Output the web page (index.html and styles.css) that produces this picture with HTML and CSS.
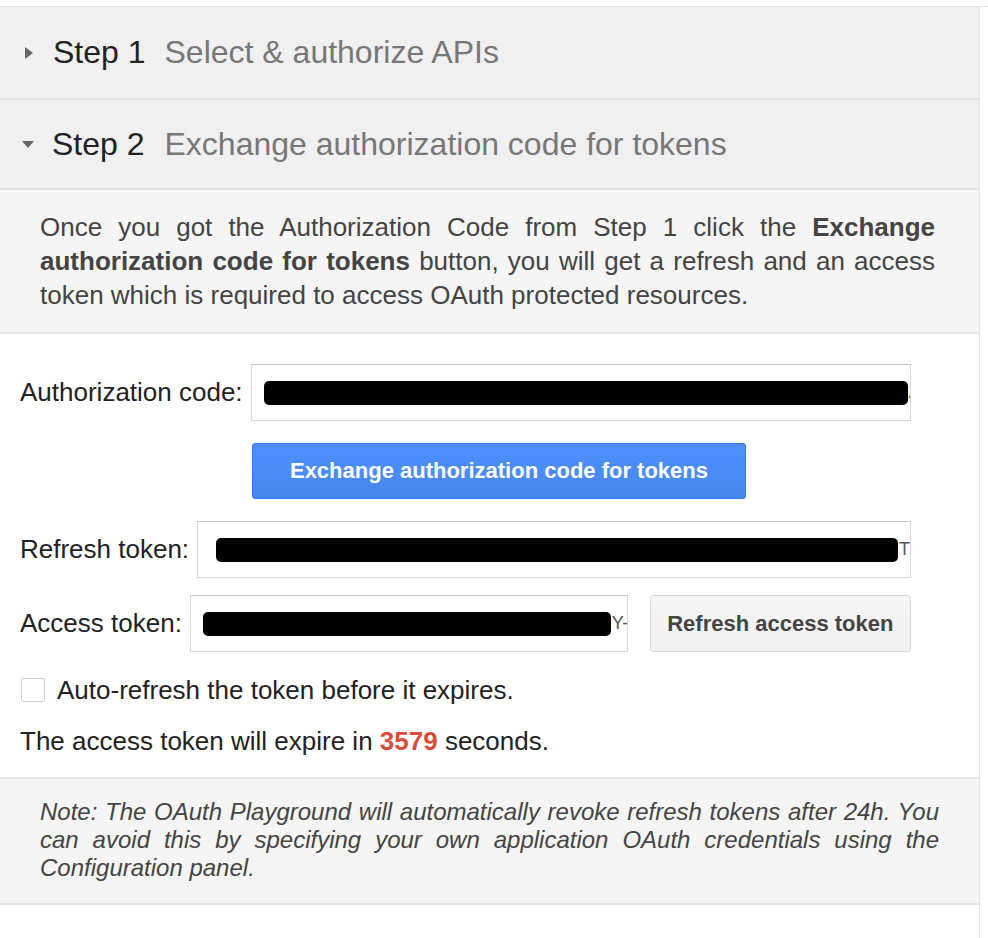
FILE: index.html
```html
<!DOCTYPE html>
<html>
<head>
<meta charset="utf-8">
<link rel="stylesheet" href="styles.css">
</head>
<body>
<div class="page">
  <div class="frame">
    <div class="panel">
      <div class="step step-one">
        <span class="tri tri-right"></span>
        <span class="step-num">Step 1</span>
        <span class="step-title">Select &amp; authorize APIs</span>
      </div>
      <div class="step step-two">
        <span class="tri tri-down"></span>
        <span class="step-num">Step 2</span>
        <span class="step-title">Exchange authorization code for tokens</span>
      </div>
      <div class="desc">
        Once you got the Authorization Code from Step 1 click the <b>Exchange authorization code for tokens</b> button, you will get a refresh and an access token which is required to access OAuth protected resources.
      </div>
      <div class="content">
        <div class="row">
          <label class="lbl">Authorization code:</label>
          <div class="field field-auth"><span class="redact redact-auth"></span><span class="tail">A</span></div>
        </div>
        <button class="btn-primary">Exchange authorization code for tokens</button>
        <div class="row row-refresh">
          <label class="lbl">Refresh token:</label>
          <div class="field field-refresh"><span class="redact redact-refresh"></span><span class="tail">Ti</span></div>
        </div>
        <div class="row row-access">
          <label class="lbl">Access token:</label>
          <div class="field field-access"><span class="redact redact-access"></span><span class="tail">Y-</span></div>
          <button class="btn-secondary">Refresh access token</button>
        </div>
        <div class="check-row">
          <span class="checkbox"></span>
          <span class="check-label">Auto-refresh the token before it expires.</span>
        </div>
        <div class="expire">The access token will expire in <b class="secs">3579</b> seconds.</div>
      </div>
      <div class="note">Note: The OAuth Playground will automatically revoke refresh tokens after 24h. You can avoid this by specifying your own application OAuth credentials using the Configuration panel.</div>
    </div>
  </div>
</div>
</body>
</html>
```
FILE: styles.css
```css
html, body {
  margin: 0;
  padding: 0;
  background: #fff;
}
body {
  font-family: "Liberation Sans", Arial, sans-serif;
  color: #222;
}
.page {
  padding-top: 6px;
}
.frame {
  border-top: 1px solid #e5e5e5;
}
.panel {
  width: 980px;
  border-right: 1px solid #e6e6e6;
  min-height: 931px;
  box-sizing: border-box;
}
.step {
  display: flex;
  align-items: center;
  background: #f0f0f0;
  border-bottom: 2px solid #e3e3e3;
  box-sizing: border-box;
  font-size: 32px;
  white-space: nowrap;
}
.step-one {
  height: 93px;
}
.step-two {
  height: 90px;
}
.tri {
  display: inline-block;
  width: 0;
  height: 0;
}
.tri-right {
  margin-left: 25px;
  margin-right: 20px;
  border-top: 6.5px solid transparent;
  border-bottom: 6.5px solid transparent;
  border-left: 8px solid #666;
}
.tri-down {
  margin-left: 22px;
  margin-right: 18px;
  border-left: 6.5px solid transparent;
  border-right: 6.5px solid transparent;
  border-top: 7px solid #666;
}
.step-num {
  color: #222;
  margin-right: 19px;
}
.step-two .step-num {
  margin-right: 20px;
}
.step-title {
  color: #777;
}
.desc {
  background: #f5f5f5;
  border-bottom: 2px solid #e5e5e5;
  padding: 20px 44px 20px 40px;
  font-size: 26px;
  line-height: 34px;
  color: #444;
  text-align: justify;
}
.desc b {
  color: #444;
}
.content {
  padding: 30px 0 21px 20px;
  border-bottom: 2px solid #e5e5e5;
}
.row {
  display: flex;
  align-items: center;
  width: 891px;
}
.lbl {
  font-size: 26px;
  color: #222;
  margin-right: 8px;
  white-space: nowrap;
}
.field {
  position: relative;
  height: 57px;
  box-sizing: border-box;
  border: 1px solid #d9d9d9;
  border-top-color: #c4c4c4;
  background: #fff;
  display: flex;
  align-items: center;
  overflow: hidden;
  white-space: nowrap;
  font-size: 26px;
  color: #333;
}
.field-auth {
  flex: 1;
  padding-left: 12px;
}
.field-refresh {
  flex: 1;
  padding-left: 18px;
}
.field-access {
  width: 438px;
  padding-left: 12px;
}
.redact {
  display: inline-block;
  height: 24px;
  background: #000;
  border-radius: 5px;
  flex: none;
}
.redact-auth {
  width: 644px;
}
.redact-refresh {
  width: 682px;
}
.redact-access {
  width: 408px;
}
.tail {
  font-size: 18px;
  color: #555;
  margin-left: 1px;
}
.btn-primary {
  display: block;
  margin: 22px 0 0 232px;
  width: 494px;
  height: 56px;
  box-sizing: border-box;
  border: 1px solid #3079ed;
  border-radius: 3px;
  background: linear-gradient(#4d90fe, #4787ed);
  color: #fff;
  font-family: "Liberation Sans", Arial, sans-serif;
  font-weight: bold;
  font-size: 22px;
  padding: 0;
}
.row-refresh {
  margin-top: 22px;
}
.row-access {
  margin-top: 17px;
}
.btn-secondary {
  margin-left: 22px;
  width: 261px;
  height: 57px;
  box-sizing: border-box;
  border: 1px solid #d9d9d9;
  border-radius: 3px;
  background: linear-gradient(#f5f5f5, #f1f1f1);
  color: #444;
  font-family: "Liberation Sans", Arial, sans-serif;
  font-weight: bold;
  font-size: 22px;
  padding: 0;
}
.check-row {
  display: flex;
  align-items: center;
  margin-top: 23px;
  height: 30px;
}
.checkbox {
  display: inline-block;
  width: 24px;
  height: 24px;
  box-sizing: border-box;
  border: 1px solid #d0d0d0;
  border-radius: 2px;
  background: #fff;
  margin-left: 1px;
  margin-right: 12px;
}
.check-label {
  font-size: 26px;
  color: #222;
}
.expire {
  margin-top: 21px;
  font-size: 26px;
  line-height: 30px;
  color: #222;
}
.secs {
  color: #dd4b39;
}
.note {
  background: #f5f5f5;
  border-bottom: 2px solid #e5e5e5;
  padding: 19px 40px 21px 40px;
  font-size: 24px;
  line-height: 28px;
  font-style: italic;
  color: #444;
  text-align: justify;
}
```
